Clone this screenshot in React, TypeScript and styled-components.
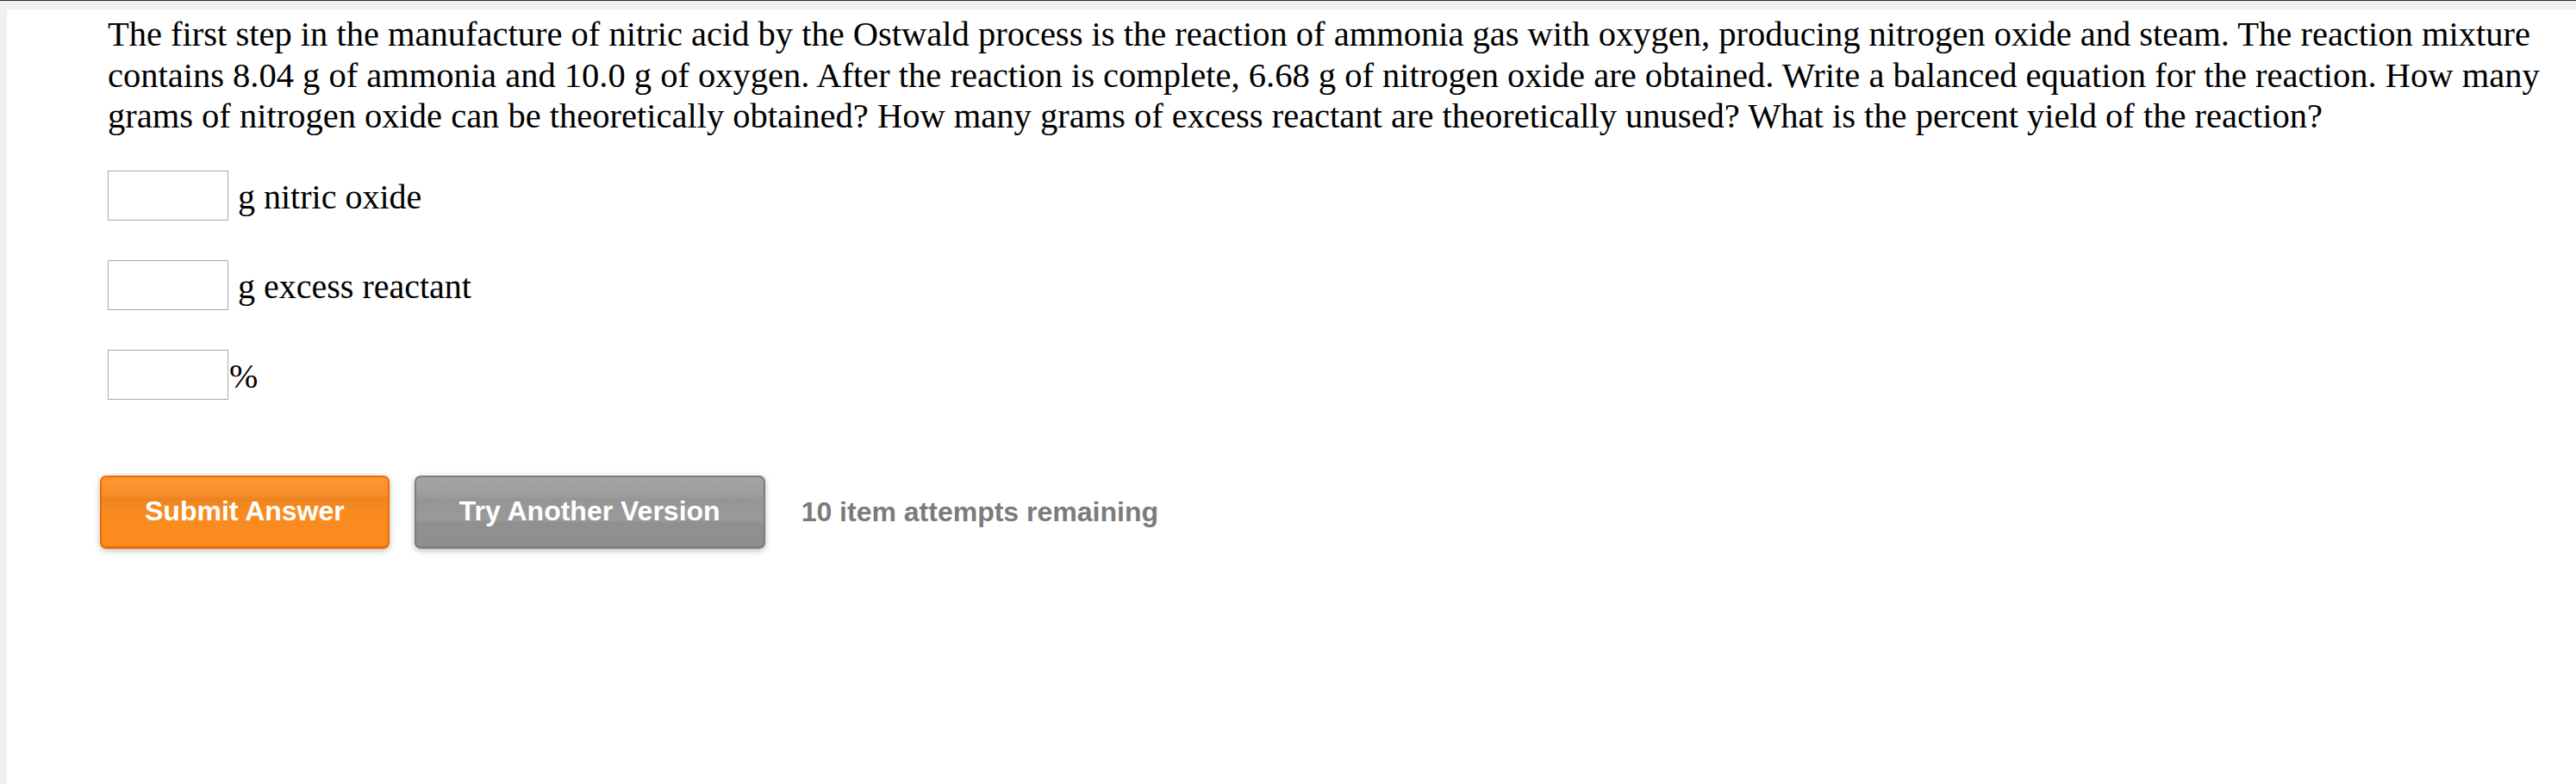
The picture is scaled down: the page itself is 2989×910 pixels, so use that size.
import React from 'react';
import styled, { createGlobalStyle } from 'styled-components';

const GlobalStyle = createGlobalStyle`
  html, body {
    margin: 0;
    padding: 0;
    background: #f0f0f0;
  }
  body {
    border-top: 1px solid #2e2e2e;
  }
`;

const Page = styled.div`
  padding: 10px 0 0 8px;
  min-height: 910px;
  box-sizing: border-box;
`;

const Panel = styled.div`
  background: #ffffff;
  min-height: 899px;
  padding: 5px 30px 0 117px;
  box-sizing: border-box;
`;

const Question = styled.p`
  margin: 0;
  font-family: 'Liberation Serif', 'Times New Roman', serif;
  font-size: 40.5px;
  line-height: 47.6px;
  color: #000;
`;

const Answers = styled.div`
  display: flex;
  flex-direction: column;
  gap: 46px;
  margin-top: 39px;
`;

const AnswerRow = styled.div`
  display: flex;
  align-items: center;
  height: 58px;
`;

const AnswerInput = styled.input`
  width: 140px;
  height: 58px;
  box-sizing: border-box;
  border: 1px solid #a9a9a9;
  background: #fff;
  margin: 0;
  padding: 0 6px;
  font-family: 'Liberation Serif', serif;
  font-size: 32px;
  outline: none;
`;

const Unit = styled.span<{ $tight?: boolean }>`
  font-family: 'Liberation Serif', 'Times New Roman', serif;
  font-size: 40px;
  line-height: 1;
  color: #000;
  margin-left: ${(p) => (p.$tight ? '1px' : '11px')};
  padding-top: 4px;
`;

const Actions = styled.div`
  display: flex;
  align-items: center;
  gap: 29px;
  margin: 88px 0 0 -9px;
`;

const Button = styled.button<{ $variant: 'primary' | 'secondary' }>`
  height: 85px;
  padding: 0 50px;
  box-sizing: border-box;
  border-radius: 7px;
  border: 2px solid ${(p) => (p.$variant === 'primary' ? '#ee6a05' : '#7d7d7d')};
  border-bottom-width: 3px;
  background: ${(p) =>
    p.$variant === 'primary'
      ? 'linear-gradient(#fd9637 0%, #f89029 24%, #ec841f 32%, #f88b21 50%, #fd8b1e 100%)'
      : 'linear-gradient(#a4a4a4 0%, #9e9e9e 24%, #959595 32%, #9a9a9a 62%, #909090 66%, #8f8f8f 100%)'};
  box-shadow: 0 2px 7px rgba(0, 0, 0, 0.28);
  color: #fff;
  font-family: 'Liberation Sans', Arial, sans-serif;
  font-weight: 700;
  font-size: 32px;
  cursor: pointer;
`;

const Attempts = styled.span`
  margin-left: 13px;
  font-family: 'Liberation Sans', Arial, sans-serif;
  font-weight: 700;
  font-size: 32px;
  color: #7b7b7b;
`;

const answers = [
  { id: 'no', unit: 'g nitric oxide' },
  { id: 'excess', unit: 'g excess reactant' },
  { id: 'yield', unit: '%', tight: true },
];

export default function App() {
  return (
    <>
      <GlobalStyle />
      <Page>
        <Panel>
          <Question>
            The first step in the manufacture of nitric acid by the Ostwald process is the reaction of
            ammonia gas with oxygen, producing nitrogen oxide and steam. The reaction mixture contains
            8.04 g of ammonia and 10.0 g of oxygen. After the reaction is complete, 6.68 g of nitrogen
            oxide are obtained. Write a balanced equation for the reaction. How many grams of nitrogen
            oxide can be theoretically obtained? How many grams of excess reactant are theoretically
            unused? What is the percent yield of the reaction?
          </Question>
          <Answers>
            {answers.map((a) => (
              <AnswerRow key={a.id}>
                <AnswerInput type="text" aria-label={a.unit} />
                <Unit $tight={a.tight}>{a.unit}</Unit>
              </AnswerRow>
            ))}
          </Answers>
          <Actions>
            <Button $variant="primary">Submit Answer</Button>
            <Button $variant="secondary">Try Another Version</Button>
            <Attempts>10 item attempts remaining</Attempts>
          </Actions>
        </Panel>
      </Page>
    </>
  );
}
